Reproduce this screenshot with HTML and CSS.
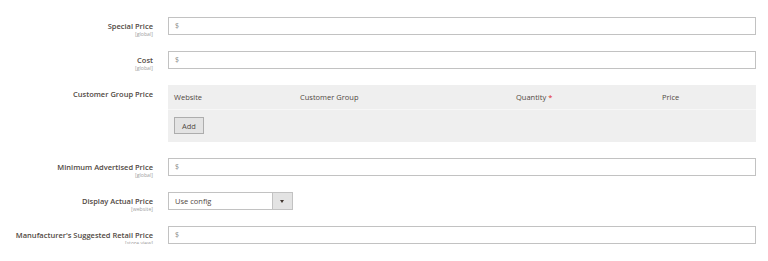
FILE: index.html
```html
<!DOCTYPE html>
<html lang="en">
<head>
  <meta charset="UTF-8">
  <title>Advanced Pricing</title>
  <link rel="stylesheet" href="styles.css">
</head>
<body>
  <div class="fieldset">
    <div class="field">
      <div class="field-label"><span class="title">Special Price</span><span class="scope">[global]</span></div>
      <div class="control"><div class="admin-input">$</div></div>
    </div>

    <div class="field">
      <div class="field-label"><span class="title">Cost</span><span class="scope">[global]</span></div>
      <div class="control"><div class="admin-input">$</div></div>
    </div>

    <div class="field">
      <div class="field-label"><span class="title">Customer Group Price</span></div>
      <div class="control">
        <div class="dynamic-rows">
          <div class="rows-head">
            <span>Website</span>
            <span>Customer Group</span>
            <span>Quantity <em class="req">*</em></span>
            <span>Price</span>
          </div>
          <div class="rows-body">
            <button class="btn-add">Add</button>
          </div>
        </div>
      </div>
    </div>

    <div class="field">
      <div class="field-label"><span class="title">Minimum Advertised Price</span><span class="scope">[global]</span></div>
      <div class="control"><div class="admin-input">$</div></div>
    </div>

    <div class="field">
      <div class="field-label"><span class="title">Display Actual Price</span><span class="scope">[website]</span></div>
      <div class="control">
        <div class="admin-select">
          <span class="value">Use config</span>
          <span class="arrow"></span>
        </div>
      </div>
    </div>

    <div class="field">
      <div class="field-label"><span class="title">Manufacturer's Suggested Retail Price</span><span class="scope">[store view]</span></div>
      <div class="control"><div class="admin-input">$</div></div>
    </div>
  </div>
</body>
</html>
```

FILE: styles.css
```css
body {
  margin: 0;
  background-color: #ffffff;
  font-family: 'Open Sans', 'Noto Sans', sans-serif;
  color: #41362f;
}
.fieldset {
  display: flex;
  flex-direction: column;
  gap: 16px;
  padding: 17px 12px 0 0;
}
.field {
  display: grid;
  grid-template-columns: 153px 1fr;
  column-gap: 15px;
}
.field-label {
  display: flex;
  flex-direction: column;
  align-items: flex-end;
  height: 18px;
  padding-top: 3px;
  box-sizing: border-box;
}
.title {
  font-size: 7.5px;
  font-weight: 600;
  line-height: 12px;
  white-space: nowrap;
  color: #514943;
}
.scope {
  font-size: 5.2px;
  line-height: 6px;
  color: #a0a0a0;
  margin-top: -1px;
}
.admin-input {
  height: 18px;
  box-sizing: border-box;
  border: 1px solid #c2c2c2;
  padding: 0 6px;
  font-size: 7px;
  line-height: 16px;
  color: #8a8a8a;
}
.dynamic-rows {
  background-color: #efefef;
}
.rows-head {
  display: grid;
  grid-template-columns: 126px 216px 146px 1fr;
  height: 24px;
  padding-left: 6px;
  align-items: center;
  border-bottom: 1px solid #f7f7f7;
  font-size: 7.5px;
  color: #514943;
}
.req {
  font-style: normal;
  color: #e22626;
}
.rows-body {
  padding: 7px 6px 8px;
}
.btn-add {
  display: block;
  width: 30px;
  height: 17px;
  padding: 0;
  background-color: #e3e3e3;
  border: 1px solid #adadad;
  font-family: inherit;
  font-size: 7.5px;
  color: #514943;
}
.admin-select {
  display: flex;
  width: 125px;
  height: 18px;
  box-sizing: border-box;
  border: 1px solid #c2c2c2;
}
.admin-select .value {
  flex: 1;
  padding: 0 6px;
  font-size: 7.5px;
  line-height: 16px;
  color: #514943;
}
.admin-select .arrow {
  position: relative;
  width: 19px;
  background-color: #e3e3e3;
  border-left: 1px solid #c2c2c2;
}
.admin-select .arrow::after {
  content: '';
  position: absolute;
  left: 7px;
  top: 7px;
  border-left: 2.5px solid transparent;
  border-right: 2.5px solid transparent;
  border-top: 3px solid #41362f;
}
```
